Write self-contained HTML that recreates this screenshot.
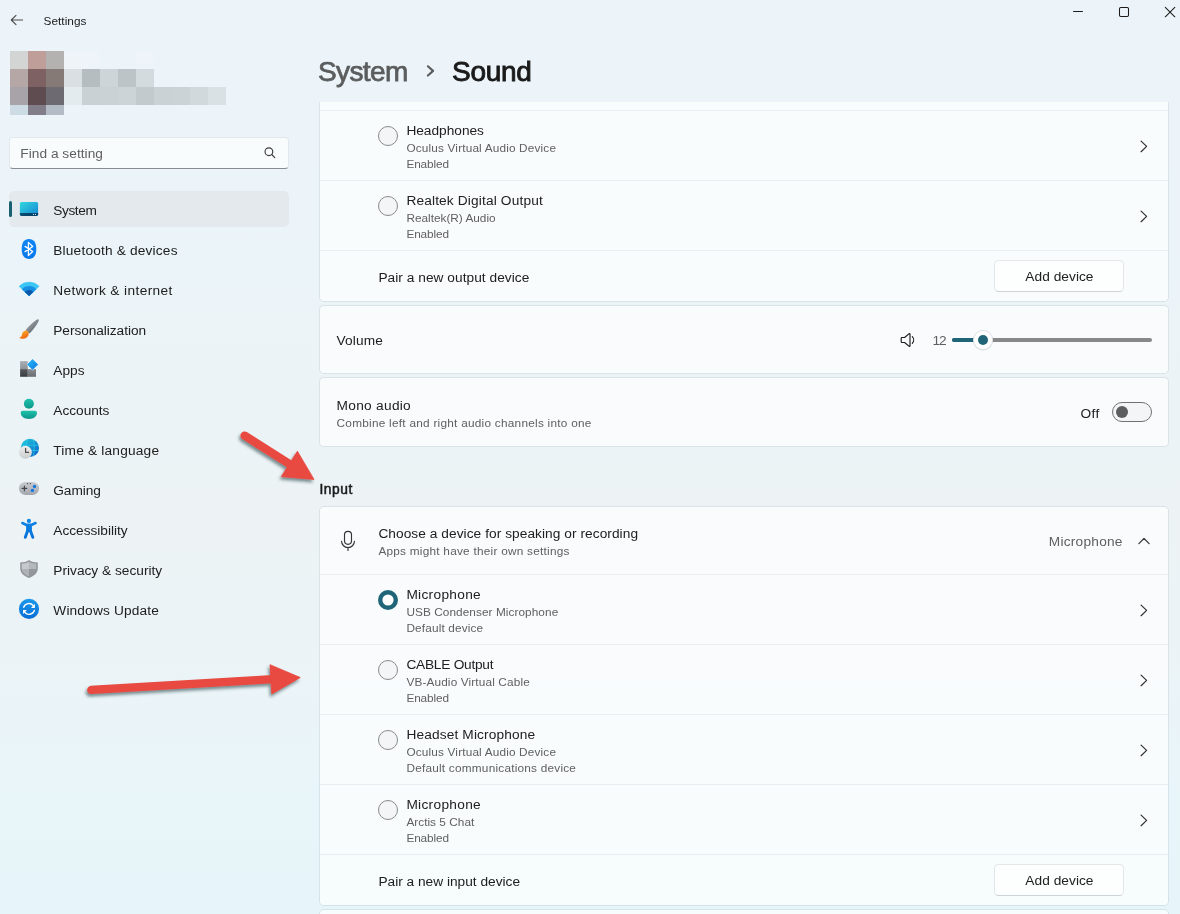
<!DOCTYPE html>
<html><head><meta charset="utf-8"><title>Settings</title>
<style>
*{box-sizing:border-box;margin:0;padding:0}
html,body{width:1180px;height:914px;overflow:hidden}
body{font-family:"Liberation Sans",sans-serif;position:relative;background:#ecf4f8;
 background-image:linear-gradient(180deg,#ecf4f9 0%,#ebf4f8 30%,#ecf3f6 48%,#edf3f5 56%,#ecf3f6 68%,#e9f5f9 85%,#e6f5f9 100%);}
.t{position:absolute;white-space:nowrap}
.abs{position:absolute}
.card{position:absolute;left:319px;width:850px;background:rgba(255,255,255,.68);border:1px solid rgba(20,75,75,.085);border-radius:5px;background-clip:padding-box}
.sep{position:absolute;left:320px;width:848px;height:1px;background:rgba(20,50,60,.065)}
.btn{position:absolute;left:994.3px;width:129.5px;height:31.5px;background:#fdfefe;border:1px solid #e2e8ea;border-bottom-color:#cdd4d7;border-radius:4.5px}
.radio{position:absolute;left:378px;width:20px;height:20px;border-radius:50%;border:1px solid #878a8c;background:#f3f5f6}
.radio.on{border:4.7px solid #1f6577;background:#fdfefe}
svg{position:absolute;overflow:visible}
</style></head>
<body>
<div id="layer" style="position:absolute;left:0;top:0;width:1180px;height:914px;will-change:transform">
<div class="card" style="top:60px;height:242px"></div>
<div class="card" style="top:305px;height:69px"></div>
<div class="card" style="top:377px;height:70px"></div>
<div class="card" style="top:506px;height:400px"></div>
<div class="card" style="top:909px;height:60px"></div>
<div class="abs" style="left:300px;top:0;width:880px;height:102px;background:#ecf4f9"></div>
<div class="sep" style="top:110px"></div><div class="sep" style="top:180px"></div><div class="sep" style="top:250px"></div><div class="sep" style="top:574px"></div><div class="sep" style="top:644px"></div><div class="sep" style="top:714px"></div><div class="sep" style="top:784px"></div><div class="sep" style="top:854px"></div>
<div class="t" style="left:318.00px;top:55.00px;font-size:28px;line-height:34px;letter-spacing:-0.609px;color:#5b5c5d;-webkit-text-stroke:.75px currentColor;">System</div>
<div class="t" style="left:452.00px;top:55.00px;font-size:28px;line-height:34px;letter-spacing:-0.294px;color:#1a1a1a;-webkit-text-stroke:.9px currentColor;">Sound</div>
<div class="radio" style="top:126px"></div>
<div class="t" style="left:406.40px;top:121.00px;font-size:13.7px;line-height:20px;letter-spacing:-0.010px;color:#202020;">Headphones</div>
<div class="t" style="left:406.40px;top:139.00px;font-size:11.8px;line-height:18px;letter-spacing:0.163px;color:#5f6061;">Oculus Virtual Audio Device</div>
<div class="t" style="left:406.40px;top:155.00px;font-size:11.8px;line-height:18px;letter-spacing:-0.115px;color:#5f6061;">Enabled</div>
<div class="radio" style="top:196px"></div>
<div class="t" style="left:406.40px;top:191.00px;font-size:13.7px;line-height:20px;letter-spacing:0.152px;color:#202020;">Realtek Digital Output</div>
<div class="t" style="left:406.40px;top:209.00px;font-size:11.8px;line-height:18px;letter-spacing:-0.000px;color:#5f6061;">Realtek(R) Audio</div>
<div class="t" style="left:406.40px;top:225.00px;font-size:11.8px;line-height:18px;letter-spacing:-0.115px;color:#5f6061;">Enabled</div>
<div class="t" style="left:378.40px;top:268.00px;font-size:13.7px;line-height:20px;letter-spacing:0.044px;color:#202020;">Pair a new output device</div>
<div class="btn" style="top:260px"></div>
<div class="t" style="left:1025.30px;top:267.00px;font-size:13.7px;line-height:20px;letter-spacing:0.051px;color:#202020;">Add device</div>
<div class="t" style="left:336.60px;top:331.00px;font-size:13.7px;line-height:20px;letter-spacing:0.100px;color:#202020;">Volume</div>
<div class="t" style="left:932.40px;top:331.00px;font-size:13.7px;line-height:20px;letter-spacing:-0.920px;color:#5f6061;">12</div>
<div class="abs" style="left:952px;top:338px;width:200px;height:4px;border-radius:2px;background:#868889"></div>
<div class="abs" style="left:952px;top:338px;width:32px;height:4px;border-radius:2px;background:#1f6577"></div>
<div class="abs" style="left:973px;top:330px;width:20px;height:20px;border-radius:50%;background:#fff;border:1px solid #dfe3e5;box-shadow:0 .5px 1px rgba(0,0,0,.12)"></div>
<div class="abs" style="left:977.8px;top:334.8px;width:10.4px;height:10.4px;border-radius:50%;background:#1f6577"></div>
<div class="t" style="left:336.60px;top:396.00px;font-size:13.7px;line-height:20px;letter-spacing:0.290px;color:#202020;">Mono audio</div>
<div class="t" style="left:336.60px;top:414.00px;font-size:11.8px;line-height:18px;letter-spacing:0.255px;color:#5f6061;">Combine left and right audio channels into one</div>
<div class="t" style="left:1080.40px;top:404.00px;font-size:13.7px;line-height:20px;letter-spacing:0.393px;color:#202020;">Off</div>
<div class="abs" style="left:1112px;top:402px;width:40px;height:20px;border-radius:10px;border:1px solid #6f7172;background:#f3f5f6"></div>
<div class="abs" style="left:1116px;top:406px;width:12px;height:12px;border-radius:50%;background:#5d5e5f"></div>
<div class="t" style="left:319.40px;top:480.00px;font-size:13.8px;line-height:20px;letter-spacing:0.581px;color:#1a1a1a;-webkit-text-stroke:.5px currentColor;">Input</div>
<div class="t" style="left:378.40px;top:524.00px;font-size:13.7px;line-height:20px;letter-spacing:0.061px;color:#202020;">Choose a device for speaking or recording</div>
<div class="t" style="left:378.40px;top:542.00px;font-size:11.8px;line-height:18px;letter-spacing:0.244px;color:#5f6061;">Apps might have their own settings</div>
<div class="t" style="left:1048.80px;top:532.00px;font-size:13.7px;line-height:20px;letter-spacing:0.241px;color:#5f6061;">Microphone</div>
<div class="t" style="left:406.40px;top:585.00px;font-size:13.7px;line-height:20px;letter-spacing:0.311px;color:#202020;">Microphone</div>
<div class="t" style="left:406.40px;top:603.00px;font-size:11.8px;line-height:18px;letter-spacing:0.071px;color:#5f6061;">USB Condenser Microphone</div>
<div class="t" style="left:406.40px;top:619.00px;font-size:11.8px;line-height:18px;letter-spacing:0.152px;color:#5f6061;">Default device</div>
<div class="radio" style="top:660px"></div>
<div class="t" style="left:406.40px;top:655.00px;font-size:13.7px;line-height:20px;letter-spacing:-0.238px;color:#202020;">CABLE Output</div>
<div class="t" style="left:406.40px;top:673.00px;font-size:11.8px;line-height:18px;letter-spacing:0.137px;color:#5f6061;">VB-Audio Virtual Cable</div>
<div class="t" style="left:406.40px;top:689.00px;font-size:11.8px;line-height:18px;letter-spacing:-0.115px;color:#5f6061;">Enabled</div>
<div class="radio" style="top:730px"></div>
<div class="t" style="left:406.40px;top:725.00px;font-size:13.7px;line-height:20px;letter-spacing:0.149px;color:#202020;">Headset Microphone</div>
<div class="t" style="left:406.40px;top:743.00px;font-size:11.8px;line-height:18px;letter-spacing:0.163px;color:#5f6061;">Oculus Virtual Audio Device</div>
<div class="t" style="left:406.40px;top:759.00px;font-size:11.8px;line-height:18px;letter-spacing:0.224px;color:#5f6061;">Default communications device</div>
<div class="radio" style="top:800px"></div>
<div class="t" style="left:406.40px;top:795.00px;font-size:13.7px;line-height:20px;letter-spacing:0.311px;color:#202020;">Microphone</div>
<div class="t" style="left:406.40px;top:813.00px;font-size:11.8px;line-height:18px;letter-spacing:0.027px;color:#5f6061;">Arctis 5 Chat</div>
<div class="t" style="left:406.40px;top:829.00px;font-size:11.8px;line-height:18px;letter-spacing:-0.115px;color:#5f6061;">Enabled</div>
<div class="t" style="left:378.40px;top:872.00px;font-size:13.7px;line-height:20px;letter-spacing:0.006px;color:#202020;">Pair a new input device</div>
<div class="btn" style="top:864px"></div>
<div class="t" style="left:1025.30px;top:871.00px;font-size:13.7px;line-height:20px;letter-spacing:0.051px;color:#202020;">Add device</div>
<svg style="left:0;top:0" width="40" height="40" viewBox="0 0 40 40" fill="none" stroke="#4a4a4a" stroke-width="1.1" stroke-linecap="round" stroke-linejoin="round"><path d="M22.6 20H11.4M16 15.3L11.3 20l4.7 4.7"/></svg>
<div class="t" style="left:43.50px;top:12.00px;font-size:11.8px;line-height:18px;letter-spacing:0.045px;color:#202020;">Settings</div>
<div class="abs" style="left:10px;top:51px;width:18px;height:18px;background:#d3d4d4"></div><div class="abs" style="left:28px;top:51px;width:18px;height:18px;background:#bf9e99"></div><div class="abs" style="left:46px;top:51px;width:18px;height:18px;background:#b3b2b0"></div><div class="abs" style="left:64px;top:51px;width:18px;height:18px;background:#eef4f8"></div><div class="abs" style="left:82px;top:51px;width:18px;height:18px;background:#eef4f9"></div><div class="abs" style="left:100px;top:51px;width:18px;height:18px;background:#edf4f9"></div><div class="abs" style="left:118px;top:51px;width:18px;height:18px;background:#edf4f9"></div><div class="abs" style="left:136px;top:51px;width:18px;height:18px;background:#eef4f9"></div><div class="abs" style="left:154px;top:51px;width:18px;height:18px;background:#ecf3f9"></div><div class="abs" style="left:172px;top:51px;width:18px;height:18px;background:#ecf3f9"></div><div class="abs" style="left:190px;top:51px;width:18px;height:18px;background:#edf4f9"></div><div class="abs" style="left:208px;top:51px;width:18px;height:18px;background:#ecf3f9"></div>
<div class="abs" style="left:10px;top:69px;width:18px;height:18px;background:#b5a7a6"></div><div class="abs" style="left:28px;top:69px;width:18px;height:18px;background:#7e6263"></div><div class="abs" style="left:46px;top:69px;width:18px;height:18px;background:#867a77"></div><div class="abs" style="left:64px;top:69px;width:18px;height:18px;background:#d9dfe2"></div><div class="abs" style="left:82px;top:69px;width:18px;height:18px;background:#b5bdc1"></div><div class="abs" style="left:100px;top:69px;width:18px;height:18px;background:#ced5d9"></div><div class="abs" style="left:118px;top:69px;width:18px;height:18px;background:#bdc4c8"></div><div class="abs" style="left:136px;top:69px;width:18px;height:18px;background:#d3dbde"></div>
<div class="abs" style="left:10px;top:87px;width:18px;height:18px;background:#a7a3a9"></div><div class="abs" style="left:28px;top:87px;width:18px;height:18px;background:#5f4c50"></div><div class="abs" style="left:46px;top:87px;width:18px;height:18px;background:#6e6a71"></div><div class="abs" style="left:64px;top:87px;width:18px;height:18px;background:#e4ebef"></div><div class="abs" style="left:82px;top:87px;width:18px;height:18px;background:#cad1d5"></div><div class="abs" style="left:100px;top:87px;width:18px;height:18px;background:#cbd2d6"></div><div class="abs" style="left:118px;top:87px;width:18px;height:18px;background:#cdd4d8"></div><div class="abs" style="left:136px;top:87px;width:18px;height:18px;background:#c3cace"></div><div class="abs" style="left:154px;top:87px;width:18px;height:18px;background:#cbd2d6"></div><div class="abs" style="left:172px;top:87px;width:18px;height:18px;background:#ccd3d7"></div><div class="abs" style="left:190px;top:87px;width:18px;height:18px;background:#d2d9dd"></div><div class="abs" style="left:208px;top:87px;width:18px;height:18px;background:#dae1e4"></div>
<div class="abs" style="left:10px;top:105px;width:18px;height:10px;background:#cddbe4"></div><div class="abs" style="left:28px;top:105px;width:18px;height:10px;background:#817e8a"></div><div class="abs" style="left:46px;top:105px;width:18px;height:10px;background:#b3bcc5"></div>
<div class="abs" style="left:9px;top:137px;width:280px;height:32px;background:#f9fcfd;border:1px solid #e1e7ea;border-bottom:1px solid #8a8d8f;border-radius:4px"></div>
<div class="t" style="left:20.30px;top:144.00px;font-size:13.7px;line-height:20px;letter-spacing:0.032px;color:#5f6061;">Find a setting</div>
<svg style="left:262px;top:145px" width="16" height="16" viewBox="0 0 16 16" fill="none" stroke="#3a3a3a" stroke-width="1.15" stroke-linecap="round"><circle cx="6.900" cy="6.700" r="3.850"/><path d="M9.700 9.500l3.100 3.100"/></svg>
<div class="abs" style="left:9px;top:191.3px;width:279.5px;height:35.5px;background:#e3e9ed;border-radius:5px"></div>
<div class="abs" style="left:9px;top:201px;width:3px;height:16px;background:#1a6071;border-radius:1.5px"></div>
<div class="t" style="left:53.30px;top:201.00px;font-size:13.7px;line-height:20px;letter-spacing:-0.429px;color:#202020;">System</div>
<div class="t" style="left:53.30px;top:241.00px;font-size:13.7px;line-height:20px;letter-spacing:0.179px;color:#202020;">Bluetooth &amp; devices</div>
<div class="t" style="left:53.30px;top:281.00px;font-size:13.7px;line-height:20px;letter-spacing:0.384px;color:#202020;">Network &amp; internet</div>
<div class="t" style="left:53.30px;top:321.00px;font-size:13.7px;line-height:20px;letter-spacing:-0.058px;color:#202020;">Personalization</div>
<div class="t" style="left:53.30px;top:361.00px;font-size:13.7px;line-height:20px;letter-spacing:0.018px;color:#202020;">Apps</div>
<div class="t" style="left:53.30px;top:401.00px;font-size:13.7px;line-height:20px;letter-spacing:-0.019px;color:#202020;">Accounts</div>
<div class="t" style="left:53.30px;top:441.00px;font-size:13.7px;line-height:20px;letter-spacing:0.195px;color:#202020;">Time &amp; language</div>
<div class="t" style="left:53.30px;top:481.00px;font-size:13.7px;line-height:20px;letter-spacing:-0.079px;color:#202020;">Gaming</div>
<div class="t" style="left:53.30px;top:521.00px;font-size:13.7px;line-height:20px;letter-spacing:-0.016px;color:#202020;">Accessibility</div>
<div class="t" style="left:53.30px;top:561.00px;font-size:13.7px;line-height:20px;letter-spacing:0.007px;color:#202020;">Privacy &amp; security</div>
<div class="t" style="left:53.30px;top:601.00px;font-size:13.7px;line-height:20px;letter-spacing:0.160px;color:#202020;">Windows Update</div>
</div>
<svg style="left:0;top:0" width="1180" height="914" viewBox="0 0 1180 914">
<defs>
<linearGradient id="gSys" x1="0" y1="0" x2="1" y2="1"><stop offset="0" stop-color="#32d8df"/><stop offset="1" stop-color="#1584d2"/></linearGradient>
<linearGradient id="gSysB" x1="0" y1="0" x2="1" y2="0"><stop offset="0" stop-color="#0a4f70"/><stop offset="1" stop-color="#053a66"/></linearGradient>
<linearGradient id="gSqA" x1="0" y1="0" x2="0" y2="1"><stop offset="0" stop-color="#aaaeb4"/><stop offset="1" stop-color="#8e9399"/></linearGradient>
<linearGradient id="gSqB" x1="0" y1="0" x2="0" y2="1"><stop offset="0" stop-color="#55595d"/><stop offset="1" stop-color="#3a3d40"/></linearGradient>
<linearGradient id="gSqC" x1="0" y1="0" x2="0" y2="1"><stop offset="0" stop-color="#878b91"/><stop offset="1" stop-color="#6a6e73"/></linearGradient>
<linearGradient id="gAx" x1="0" y1="518" x2="0" y2="539" gradientUnits="userSpaceOnUse"><stop offset="0" stop-color="#1089e9"/><stop offset="1" stop-color="#066fd8"/></linearGradient>
<linearGradient id="gBt" x1="0" y1="0" x2="0" y2="1"><stop offset="0" stop-color="#0f86f4"/><stop offset="1" stop-color="#0878ec"/></linearGradient>
<linearGradient id="gBrush" x1="0.2" y1="0" x2="0.800" y2="1"><stop offset="0" stop-color="#fdb62c"/><stop offset="1" stop-color="#ef5a10"/></linearGradient>
<linearGradient id="gHandle" x1="0" y1="0" x2="1" y2="1"><stop offset="0.250" stop-color="#a4a8ad"/><stop offset="0.750" stop-color="#62676e"/></linearGradient>
<linearGradient id="gDia" x1="0" y1="0" x2="1" y2="1"><stop offset="0" stop-color="#2bb9f7"/><stop offset="1" stop-color="#0a7ae2"/></linearGradient>
<linearGradient id="gAcc" x1="0" y1="0" x2="0" y2="1"><stop offset="0" stop-color="#1fc2ab"/><stop offset="1" stop-color="#0e968b"/></linearGradient>
<linearGradient id="gGlobe" x1="0" y1="0" x2="1" y2="1"><stop offset="0.100" stop-color="#23c6dc"/><stop offset="0.900" stop-color="#0d66c8"/></linearGradient>
<linearGradient id="gClock" x1="0" y1="0" x2="0" y2="1"><stop offset="0" stop-color="#efefef"/><stop offset="1" stop-color="#cbcccd"/></linearGradient>
<linearGradient id="gPad" x1="0" y1="0" x2="0" y2="1"><stop offset="0" stop-color="#c8ccd1"/><stop offset="1" stop-color="#a4a8ae"/></linearGradient>
<linearGradient id="gUpd" x1="0" y1="0" x2="0" y2="1"><stop offset="0" stop-color="#1a99eb"/><stop offset="1" stop-color="#0a6ed6"/></linearGradient>
<linearGradient id="gSh" x1="0" y1="0" x2="1" y2="1"><stop offset="0" stop-color="#c9cbce"/><stop offset="1" stop-color="#989ca0"/></linearGradient>
<filter id="ash" x="-20%" y="-20%" width="140%" height="160%"><feDropShadow dx="-1.4" dy="2.600" stdDeviation="1.700" flood-color="#28444a" flood-opacity=".600"/></filter>
</defs>
<rect x="19.9" y="201.9" width="18.2" height="14.1" rx="1.7" fill="url(#gSys)"/><path d="M19.9 213h18.2v1.300a1.700 1.700 0 0 1-1.700 1.700h-14.800a1.700 1.700 0 0 1-1.700-1.700z" fill="url(#gSysB)"/><circle cx="33.5" cy="214.45" r=".6" fill="#c4e8f6"/><circle cx="35.55" cy="214.45" r=".6" fill="#c4e8f6"/>
<path d="M29 238.9C33.9 238.9 36.3 242.500 36.300 248.900C36.300 255.300 33.900 258.900 29 258.900C24.100 258.900 21.700 255.300 21.700 248.900C21.700 242.500 24.100 238.900 29 238.900Z" fill="url(#gBt)"/><path d="M25.1 246.4L32.700 251.500L28.400 255.500V242.400L32.700 246.500L25.100 251.600" fill="none" stroke="#fff" stroke-width="1.3" stroke-linejoin="round" stroke-linecap="round"/>
<path d="M29.1 296.0L18.94 286.36A14.0 14.0 0 0 1 39.26 286.36Z" fill="#3cc6f3" stroke="#3cc6f3" stroke-width=".3" stroke-linejoin="round"/><path d="M29.1 296.0L21.92 289.19A9.9 9.9 0 0 1 36.28 289.19Z" fill="#178fe5"/><path d="M29.1 296.0L24.82 291.94A5.9 5.9 0 0 1 33.38 291.94Z" fill="#0b57a8"/>
<path d="M38.100 319.300C38.900 319.600 38.900 320.600 38.400 321.600C36.200 326 33 330 29.600 333.400L25.500 330.200C28.600 326.200 32.600 322.200 36.600 319.700C37.200 319.300 37.700 319.100 38.100 319.300Z" fill="url(#gHandle)"/><path d="M25.600 330.600C27.200 330.400 28.900 331.900 28.700 333.900C28.400 336.900 25.600 338.700 22.600 338.700C21.300 338.700 20 338.400 19.200 337.700C20.600 337.300 21.500 336.400 21.800 335C22.200 332.900 23.400 330.900 25.600 330.600Z" fill="url(#gBrush)"/>
<rect x="20.100" y="361.100" width="7.700" height="8" fill="url(#gSqA)"/><rect x="20.100" y="369.100" width="7.700" height="7.700" fill="url(#gSqB)"/><rect x="27.800" y="369.100" width="8.200" height="7.700" fill="url(#gSqC)"/><path d="M32.600 358.500L38.600 364.500L32.600 370.500L26.600 364.500Z" fill="#edf5f9"/><path d="M32.600 359.400L37.700 364.500L32.600 369.600L27.500 364.500Z" fill="url(#gDia)" stroke="url(#gDia)" stroke-width=".8" stroke-linejoin="round"/>
<circle cx="28.900" cy="403.800" r="5" fill="url(#gAcc)"/><path d="M20.700 412.700a2 2 0 0 1 2-2h12.300a2 2 0 0 1 2 2c0 3.700-3.400 6.200-8.150 6.200s-8.150-2.500-8.150-6.200z" fill="url(#gAcc)"/>
<circle cx="29.900" cy="447.900" r="9.150" fill="url(#gGlobe)"/><g fill="none" stroke="#2fd0ee" stroke-opacity=".8" stroke-width=".8"><path d="M21.600 445.300h17M23 450.400h16M33.300 439.500C34.500 444 34.500 452 33.300 456.400M27.200 439.600C26 443 25.800 446 26 449"/></g><circle cx="25.400" cy="452.300" r="6.450" fill="url(#gClock)"/><path d="M25.600 448.400v4.050h3" fill="none" stroke="#4d4d4f" stroke-width="1.25" stroke-linecap="round" stroke-linejoin="round"/>
<rect x="18.900" y="481.900" width="20.200" height="13.100" rx="6.550" fill="url(#gPad)"/><path d="M24.400 486.100v4.600M22.100 488.400h4.600" stroke="#40444a" stroke-width="1.150" stroke-linecap="round"/><circle cx="34.500" cy="486.500" r="1.650" fill="#0f78de"/><circle cx="32.400" cy="490.400" r="1.650" fill="#0f78de"/><circle cx="27.500" cy="483.550" r=".6" fill="#3a3d42"/><circle cx="30.400" cy="483.550" r=".6" fill="#3a3d42"/>
<g fill="url(#gAx)" stroke="url(#gAx)" stroke-linecap="round" stroke-linejoin="round"><circle cx="28.900" cy="520.900" r="2.100" stroke="none"/><path d="M22.400 523.100L26.500 524.900H31.300L35.500 523.100" fill="none" stroke-width="2.700"/><rect x="26.100" y="524.300" width="5.800" height="8" rx=".8" stroke="none"/><path d="M27.500 531L25.300 537.300" fill="none" stroke-width="2.900"/><path d="M30.500 531L32.800 537.300" fill="none" stroke-width="2.900"/></g>
<clipPath id="shc"><path d="M29 561.700C31.300 563.100 33.800 563.600 36.300 563.700V568.200C36.300 572.100 33.400 574.600 29 576.300C24.600 574.600 21.700 572.100 21.700 568.200V563.700C24.200 563.600 26.700 563.100 29 561.700Z"/></clipPath><path d="M29 559.900C31.600 561.700 34.600 562.300 37.800 562.400V568.200C37.800 573 34.200 576 29 577.900C23.800 576 20.200 573 20.200 568.200V562.400C23.400 562.300 26.400 561.700 29 559.900Z" fill="#92969b"/><g clip-path="url(#shc)"><rect x="20" y="560" width="9.100" height="9" fill="#c6c9cd"/><rect x="29.100" y="560" width="9" height="9" fill="#b5b8bd"/><rect x="20" y="569" width="9.100" height="9" fill="#afb2b7"/><rect x="29.100" y="569" width="9" height="9" fill="#94989d"/></g>
<circle cx="29" cy="608.800" r="10.100" fill="url(#gUpd)"/><g fill="none" stroke="#fff" stroke-width="1.400" stroke-linecap="round"><path d="M23.700 607.300A5.500 5.500 0 0 1 33.300 605.700"/><path d="M34.400 610.400A5.500 5.500 0 0 1 24.800 612.200"/></g><path d="M34.900 603.700V607.900H31Z" fill="#fff"/><path d="M23 614.100V610H26.900Z" fill="#fff"/>
<g fill="none" stroke="#333" stroke-width="1.250" stroke-linecap="round" stroke-linejoin="round"><path d="M1141.1 141.1L1146.6 146.4L1141.1 151.70000000000002"/><path d="M1141.1 211.1L1146.6 216.4L1141.1 221.70000000000002"/><path d="M1141.1 605.1L1146.6 610.4L1141.1 615.6999999999999"/><path d="M1141.1 675.1L1146.6 680.4L1141.1 685.6999999999999"/><path d="M1141.1 745.1L1146.6 750.4L1141.1 755.6999999999999"/><path d="M1141.1 815.1L1146.6 820.4L1141.1 825.6999999999999"/><path d="M1138.9 543.6L1144 538.4L1149.1 543.6"/></g>
<circle cx="388" cy="600" r="7.800" fill="#fdfefe" stroke="#1e6577" stroke-width="4.400"/>
<path d="M427.900 66.300L433.100 70.900L427.900 75.500" fill="none" stroke="#5b5c5d" stroke-width="2.150" stroke-linecap="round" stroke-linejoin="round"/>
<g fill="none" stroke="#1c1c1c" stroke-width="1.05" stroke-linecap="round"><path d="M1073.500 11.500h9"/><rect x="1119.5" y="7.5" width="9" height="9" rx="1.3"/><path d="M1165.300 7.300l9.500 9.500M1174.800 7.300l-9.500 9.500"/></g>
<g fill="none" stroke="#1c1c1c" stroke-width="1.15" stroke-linejoin="round" stroke-linecap="round"><path d="M901.9 337.500h2.700l4.600-3.900a.5.500 0 0 1 .8.400v12a.5.500 0 0 1-.8.400l-4.600-3.900h-2.700a.7.700 0 0 1-.7-.7v-3.600a.7.700 0 0 1 .7-.7z"/><path d="M912.300 336.700a4.700 4.700 0 0 1 0 6.600"/></g>
<g fill="none" stroke="#343434" stroke-width="1.15" stroke-linecap="round"><rect x="344.500" y="531.300" width="7" height="13" rx="3.500"/><path d="M341.600 541.200a6.400 6.400 0 0 0 12.800 0M348 547.700v2.700"/></g>
<g filter="url(#ash)"><path d="M244.6 435.6L291.09 464.97" stroke="#e8483f" stroke-width="8.3" stroke-linecap="round" fill="none"/><path d="M281.40 476.59L314.0 479.4L297.40 451.21Z" fill="#e8483f" stroke="#e8483f" stroke-width=".8" stroke-linejoin="round"/></g><g filter="url(#ash)"><path d="M91.3 689.9L272.90 679.18" stroke="#e8483f" stroke-width="8.3" stroke-linecap="round" fill="none"/><path d="M271.80 693.92L300.2 677.5L270.00 664.68Z" fill="#e8483f" stroke="#e8483f" stroke-width=".8" stroke-linejoin="round"/></g>
</svg>
</body></html>
